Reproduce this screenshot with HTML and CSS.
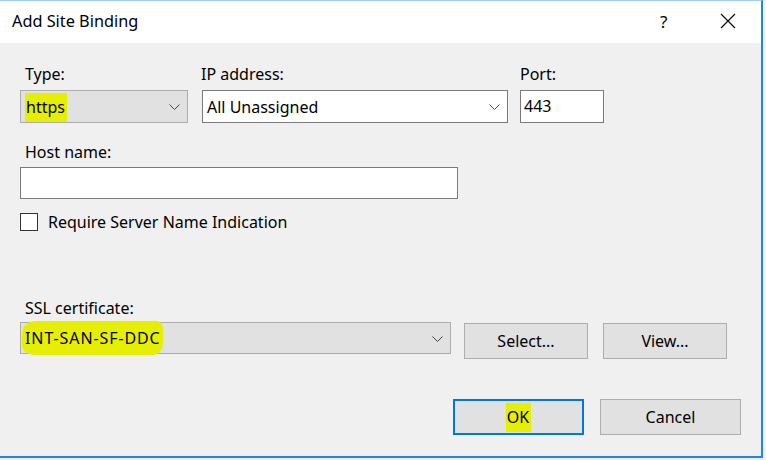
FILE: index.html
```html
<!DOCTYPE html>
<html>
<head>
<meta charset="utf-8">
<title>Add Site Binding</title>
<link rel="stylesheet" href="styles.css">
</head>
<body>
<div class="screen">
  <div class="dialog">
    <div class="titlebar">
      <span class="title">Add Site Binding</span>
      <span class="help">?</span>
      <span class="close">
        <svg width="16" height="16" viewBox="0 0 16 16"><path d="M1 1 L15 15 M15 1 L1 15" stroke="#111" stroke-width="1.3" fill="none"/></svg>
      </span>
    </div>
    <div class="content">
      <div class="row1">
        <div class="field f-type">
          <label class="lbl lbl-indent">Type:</label>
          <div class="select">
            <span class="val"><span class="hl">https</span></span>
            <svg class="chev" width="11" height="6" viewBox="0 0 11 6"><path d="M0.5 0.5 L5.5 5.5 L10.5 0.5" stroke="#444" stroke-width="1" fill="none"/></svg>
          </div>
        </div>
        <div class="field f-ip">
          <label class="lbl">IP address:</label>
          <div class="select white">
            <span class="val">All Unassigned</span>
            <svg class="chev" width="11" height="6" viewBox="0 0 11 6"><path d="M0.5 0.5 L5.5 5.5 L10.5 0.5" stroke="#444" stroke-width="1" fill="none"/></svg>
          </div>
        </div>
        <div class="field f-port">
          <label class="lbl">Port:</label>
          <div class="input port">443</div>
        </div>
      </div>

      <label class="lbl lbl-indent host-lbl">Host name:</label>
      <div class="input host"></div>

      <div class="check-row">
        <span class="checkbox"></span>
        <span class="check-text">Require Server Name Indication</span>
      </div>

      <label class="lbl lbl-indent ssl-lbl">SSL certificate:</label>
      <div class="ssl-row">
        <div class="select ssl">
          <span class="val"><span class="hl blob">INT-SAN-SF-DDC</span></span>
          <svg class="chev" width="11" height="6" viewBox="0 0 11 6"><path d="M0.5 0.5 L5.5 5.5 L10.5 0.5" stroke="#444" stroke-width="1" fill="none"/></svg>
        </div>
        <button class="btn b-select">Select...</button>
        <button class="btn b-view">View...</button>
      </div>

      <div class="actions">
        <button class="btn b-ok"><span class="hl">OK</span></button>
        <button class="btn b-cancel">Cancel</button>
      </div>
    </div>
  </div>
  <div class="side"></div>
</div>
</body>
</html>
```

FILE: styles.css
```css
html, body {
  margin: 0;
  padding: 0;
}
body {
  width: 766px;
  height: 460px;
  overflow: hidden;
  background: #ececec;
  font-family: "Noto Sans", "Open Sans", sans-serif;
  font-size: 16px;
  color: #000;
}
.screen {
  display: flex;
  align-items: flex-start;
}
.dialog {
  width: 761px;
  height: 455px;
  flex: none;
  background: #f0f0f0;
  border-top: 1px solid #9fcdf2;
  border-right: 2px solid #1f88dc;
  border-bottom: 2px solid #1f88dc;
  display: flex;
  flex-direction: column;
}
.side {
  flex: 1;
  height: 460px;
  background: #f3f3f3;
}
.titlebar {
  height: 42px;
  background: #fff;
  display: flex;
  align-items: center;
  padding-left: 12px;
}
.title {
  font-size: 16.3px;
  flex: 1;
  margin-top: -2px;
}
.help {
  font-size: 17px;
  width: 14px;
  margin-right: 46px;
  margin-top: -2px;
}
.close {
  width: 16px;
  height: 16px;
  margin-right: 25px;
  margin-top: -2px;
}
.close svg { display: block; }

.content {
  display: flex;
  flex-direction: column;
  align-items: flex-start;
  padding-left: 20px;
}
.lbl {
  display: block;
  line-height: 20px;
  height: 20px;
}
.lbl-indent { margin-left: 5px; }

.row1 {
  display: flex;
  margin-top: 21px;
}
.field {
  display: flex;
  flex-direction: column;
}
.field .lbl { margin-bottom: 6px; }
.f-type { width: 168px; margin-right: 14px; }
.f-ip { width: 306px; margin-right: 12px; }
.f-ip .lbl { margin-left: -1px; }
.f-port { width: 84px; }

.select {
  box-sizing: border-box;
  height: 33px;
  background: #e1e1e1;
  border: 1px solid #adadad;
  display: flex;
  align-items: center;
  padding-left: 4px;
  padding-right: 7px;
}
.select.white {
  background: #fff;
  border-color: #7a7a7a;
}
.select .val { flex: 1; }
.chev { flex: none; margin-top: 1px; }

.hl {
  background: #e6ef00;
  padding: 3px 2px 4px 1px;
}
.blob {
  letter-spacing: 0.9px;
  padding: 6px 2px 6px 3px;
  margin-left: -3px;
  border-radius: 14px 6px 10px 12px / 12px 8px 12px 10px;
}

.input {
  box-sizing: border-box;
  background: #fff;
  border: 1px solid #7a7a7a;
  height: 33px;
  line-height: 30px;
  padding-left: 3px;
}
.port { width: 84px; }

.host-lbl { margin-top: 19px; }
.input.host {
  margin-top: 5px;
  width: 438px;
  height: 32px;
}

.check-row {
  display: flex;
  align-items: center;
  margin-top: 14px;
  height: 18px;
}
.checkbox {
  box-sizing: border-box;
  width: 18px;
  height: 18px;
  border: 1px solid #333;
  background: #fff;
  margin-right: 10px;
}

.ssl-lbl { margin-top: 67px; }
.ssl-row {
  display: flex;
  align-items: flex-start;
  margin-top: 4px;
}
.select.ssl {
  width: 431px;
  height: 32px;
  margin-right: 13px;
}

.btn {
  box-sizing: border-box;
  font-family: inherit;
  font-size: 16px;
  color: #000;
  background: #e1e1e1;
  border: 1px solid #adadad;
  height: 36px;
  padding: 0;
  margin: 0;
}
.b-select { width: 124px; margin-top: 1px; margin-right: 15px; }
.b-view { width: 124px; margin-top: 1px; }

.actions {
  display: flex;
  margin-top: 40px;
  margin-left: 433px;
}
.b-ok {
  width: 131px;
  border: 2px solid #0078d7;
  margin-right: 16px;
}
.b-cancel { width: 141px; }
```
